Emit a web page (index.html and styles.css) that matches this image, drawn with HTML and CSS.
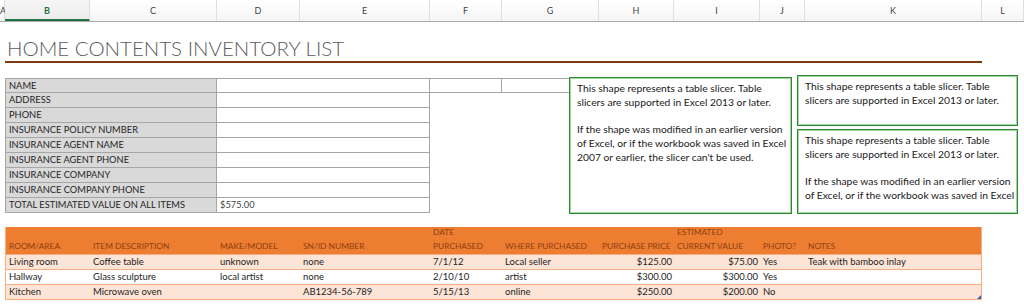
FILE: index.html
```html
<!DOCTYPE html>
<html>
<head>
<meta charset="utf-8">
<link rel="stylesheet" href="styles.css">
</head>
<body>
<div class="colheads">
  <div class="ch cha">A</div>
  <div class="ch sel">B</div>
  <div class="ch">C</div>
  <div class="ch">D</div>
  <div class="ch">E</div>
  <div class="ch">F</div>
  <div class="ch">G</div>
  <div class="ch">H</div>
  <div class="ch">I</div>
  <div class="ch">J</div>
  <div class="ch">K</div>
  <div class="ch">L</div>
</div>
<h1 class="title">HOME CONTENTS INVENTORY LIST</h1>
<div class="info">
  <div class="details">
    <div class="drow first"><div class="lbl">NAME</div><div class="val"></div><div class="val xf"></div><div class="val xg"></div></div>
    <div class="drow"><div class="lbl">ADDRESS</div><div class="val"></div></div>
    <div class="drow"><div class="lbl">PHONE</div><div class="val"></div></div>
    <div class="drow"><div class="lbl">INSURANCE POLICY NUMBER</div><div class="val"></div></div>
    <div class="drow"><div class="lbl">INSURANCE AGENT NAME</div><div class="val"></div></div>
    <div class="drow"><div class="lbl">INSURANCE AGENT PHONE</div><div class="val"></div></div>
    <div class="drow"><div class="lbl">INSURANCE COMPANY</div><div class="val"></div></div>
    <div class="drow"><div class="lbl">INSURANCE COMPANY PHONE</div><div class="val"></div></div>
    <div class="drow"><div class="lbl">TOTAL ESTIMATED VALUE ON ALL ITEMS</div><div class="val money">$575.00</div></div>
  </div>
  <div class="slicer s1">
    <p>This shape represents a table slicer. Table<br>slicers are supported in Excel 2013 or later.</p>
    <p>If the shape was modified in an earlier version<br>of Excel, or if the workbook was saved in Excel<br>2007 or earlier, the slicer can't be used.</p>
  </div>
  <div class="slicers">
    <div class="slicer s2">
      <p>This shape represents a table slicer. Table<br>slicers are supported in Excel 2013 or later.</p>
    </div>
    <div class="slicer s3">
      <p>This shape represents a table slicer. Table<br>slicers are supported in Excel 2013 or later.</p>
      <p>If the shape was modified in an earlier version<br>of Excel, or if the workbook was saved in Excel</p>
    </div>
  </div>
</div>
<div class="items">
  <div class="row head">
    <div>ROOM/AREA</div>
    <div>ITEM DESCRIPTION</div>
    <div>MAKE/MODEL</div>
    <div>SN/ID NUMBER</div>
    <div>DATE<br>PURCHASED</div>
    <div>WHERE PURCHASED</div>
    <div>PURCHASE PRICE</div>
    <div>ESTIMATED<br>CURRENT VALUE</div>
    <div>PHOTO?</div>
    <div>NOTES</div>
  </div>
  <div class="row band">
    <div>Living room</div><div>Coffee table</div><div>unknown</div><div>none</div><div>7/1/12</div><div>Local seller</div><div class="num">$125.00</div><div class="num">$75.00</div><div>Yes</div><div>Teak with bamboo inlay</div>
  </div>
  <div class="row">
    <div>Hallway</div><div>Glass sculpture</div><div>local artist</div><div>none</div><div>2/10/10</div><div>artist</div><div class="num">$300.00</div><div class="num">$300.00</div><div>Yes</div><div></div>
  </div>
  <div class="row band">
    <div>Kitchen</div><div>Microwave oven</div><div></div><div>AB1234-56-789</div><div>5/15/13</div><div>online</div><div class="num">$250.00</div><div class="num">$200.00</div><div>No</div><div></div>
  </div>
  <span class="handle"></span>
</div>
</body>
</html>
```
FILE: styles.css
```css
html, body {
  margin: 0;
  padding: 0;
  background: #ffffff;
}
body {
  width: 1024px;
  height: 307px;
  overflow: hidden;
  font-family: Lato, "Open Sans", "Liberation Sans", sans-serif;
  color: #1e1e1e;
}
.colheads {
  display: grid;
  grid-template-columns: 5px 85px 127px 83px 130px 72px 97px 75px 86px 45px 177px 42px;
  height: 21px;
  border-bottom: 1px solid #ababab;
  background: linear-gradient(#ffffff, #f5f5f5);
}
.ch {
  box-sizing: border-box;
  border-right: 1px solid #dedede;
  font-size: 9px;
  color: #444;
  display: flex;
  align-items: center;
  justify-content: center;
}
.cha {
  justify-content: flex-start;
  overflow: visible;
}
.ch.sel {
  color: #217346;
  font-weight: bold;
  border-bottom: 2px solid #217346;
  padding-top: 2px;
  background: linear-gradient(#f6f6f6, #ececec);
}
.title {
  margin: 0 0 0 5px;
  width: 977px;
  box-sizing: border-box;
  height: 41px;
  padding: 13px 0 0 2px;
  font-size: 20.5px;
  line-height: 26px;
  font-weight: 300;
  color: #5b5b5b;
  border-bottom: 2px solid #7b3a10;
}
.info {
  display: flex;
  align-items: flex-start;
  margin: 12px 0 0 5px;
}
.details {
  margin-top: 3px;
  width: 564px;
}
.drow {
  display: flex;
  height: 15px;
}
.drow > div {
  box-sizing: border-box;
  height: 15px;
  border-right: 1px solid #a6a6a6;
  border-bottom: 1px solid #a6a6a6;
  font-size: 9.3px;
  line-height: 14px;
  padding-left: 3px;
  white-space: nowrap;
}
.drow.first > div {
  border-top: 1px solid #a6a6a6;
}
.lbl {
  width: 212px;
  background: #d9d9d9;
  border-left: 1px solid #a6a6a6;
  color: #262626;
}
.val {
  width: 213px;
}
.val.xf { width: 72px; }
.val.xg { width: 67px; border-right: none; }
.money { color: #444; }
.slicer {
  box-sizing: border-box;
  border: 1px solid #2f8a2f;
  box-shadow: inset 0 0 0 1px rgba(90, 180, 90, 0.55);
  background: #fff;
  padding: 3px 7px;
  font-size: 10.3px;
  line-height: 14px;
  color: #1a1a1a;
  white-space: nowrap;
}
.slicer p {
  margin: 0 0 13px 0;
}
.s1 {
  width: 223px;
  height: 137px;
  margin-top: 2px;
}
.slicers {
  margin-left: 5px;
  display: flex;
  flex-direction: column;
  gap: 3px;
}
.s2 {
  width: 221px;
  height: 51px;
}
.s3 {
  width: 221px;
  height: 85px;
}
.items {
  position: relative;
  margin: 13px 0 0 5px;
  width: 977px;
  box-sizing: border-box;
  border-left: 1px solid #f4b084;
  border-right: 1px solid #f4b084;
}
.row {
  display: grid;
  grid-template-columns: 84px 127px 83px 130px 72px 97px 75px 86px 45px 176px;
  height: 15px;
  box-sizing: border-box;
  border-bottom: 1px solid #f4b084;
  font-size: 9.5px;
  line-height: 14px;
  white-space: nowrap;
}
.row > div {
  padding-left: 3px;
  overflow: hidden;
}
.row > div.num {
  text-align: right;
  padding-right: 2px;
  padding-left: 0;
}
.row.band {
  background: #fce4d6;
}
.row.head {
  height: 28px;
  background: #ed7d31;
  color: #8f3f12;
  align-items: end;
  padding-bottom: 1px;
  font-size: 8.4px;
}
.handle {
  position: absolute;
  right: 0;
  bottom: 1px;
  width: 0;
  height: 0;
  border-left: 4px solid transparent;
  border-bottom: 4px solid #2f5ec4;
}
```
